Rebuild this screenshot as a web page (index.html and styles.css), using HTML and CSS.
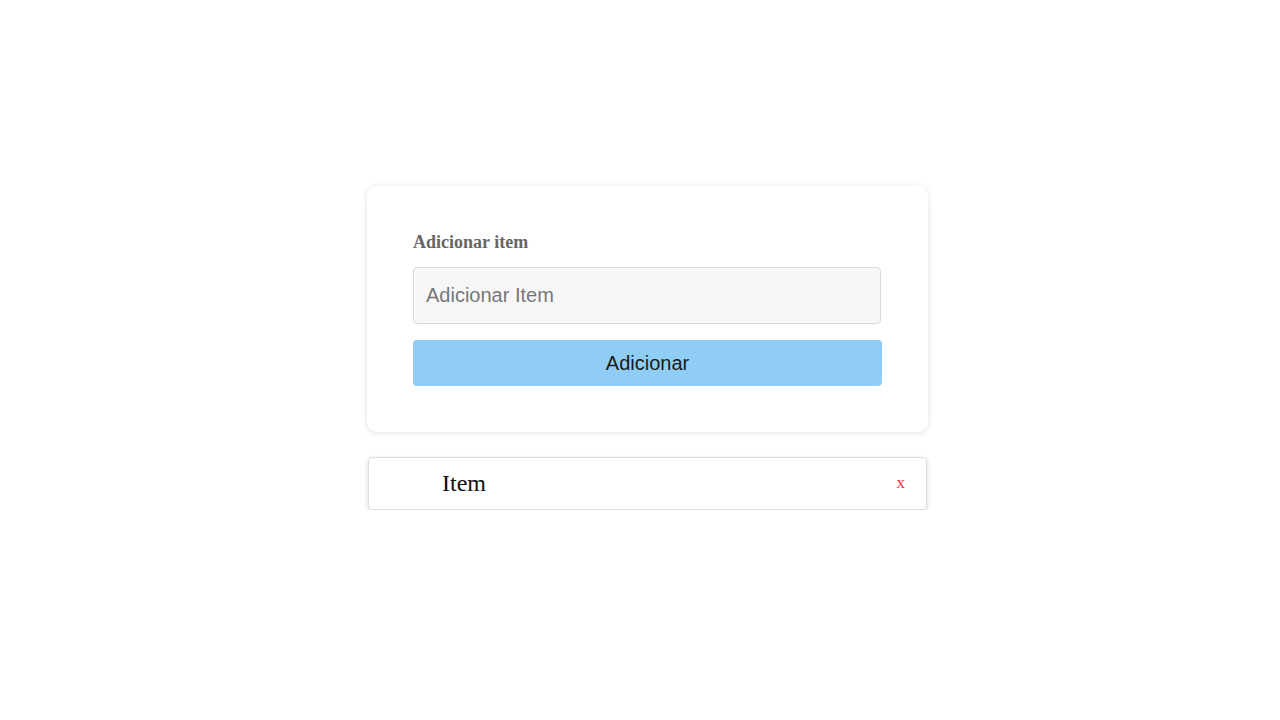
FILE: index.html
```html
<!DOCTYPE html>
<html>
<head>
<meta charset="utf-8">
<link rel="stylesheet" href="styles.css">
</head>
<body>
<div class="wrap">
  <div class="card">
    <label class="label">Adicionar item</label>
    <input class="input" type="text" placeholder="Adicionar Item">
    <button class="btn">Adicionar</button>
  </div>
  <div class="item">
    <span class="item-text">Item</span>
    <span class="remove">x</span>
  </div>
</div>
</body>
</html>
```
FILE: styles.css
```css
html, body { margin: 0; padding: 0; background: #fff; }
body { font-family: "Liberation Serif", serif; }
.wrap {
  width: 561px;
  margin: 186px 0 0 367px;
  display: flex;
  flex-direction: column;
}
.card {
  background: #fff;
  border-radius: 10px;
  box-shadow: 0 1px 6px rgba(0,0,0,0.12);
  padding: 46px 46px 46px 46px;
  display: flex;
  flex-direction: column;
}
.label {
  font-family: "Liberation Serif", serif;
  font-weight: bold;
  font-size: 18px;
  color: #666;
  line-height: 20px;
  margin-bottom: 15px;
}
.input {
  box-sizing: border-box;
  width: 468px;
  height: 57px;
  background: #f7f7f7;
  border: 1px solid #d9d9d9;
  border-radius: 4px;
  padding: 0 12px;
  font-family: "Liberation Sans", Arial, sans-serif;
  font-size: 20px;
  color: #333;
  outline: none;
}
.input::placeholder { color: #777; }
.btn {
  margin-top: 16px;
  height: 46px;
  width: 469px;
  border: none;
  border-radius: 4px;
  background: #90cdf4;
  font-family: "Liberation Sans", Arial, sans-serif;
  font-size: 20px;
  color: #1a1a1a;
}
.item {
  margin: 25px 1px 0 1px;
  height: 53px;
  box-sizing: border-box;
  border: 1px solid #ddd;
  border-radius: 4px;
  box-shadow: 0 2px 5px rgba(0,0,0,0.16);
  display: flex;
  align-items: center;
  justify-content: space-between;
  padding: 0 21px 0 73px;
}
.item-text {
  font-family: "Liberation Serif", serif;
  font-size: 24px;
  color: #111;
}
.remove {
  font-family: "Liberation Serif", serif;
  font-size: 17px;
  color: #f0304a;
  margin-top: -2px;
}
```
